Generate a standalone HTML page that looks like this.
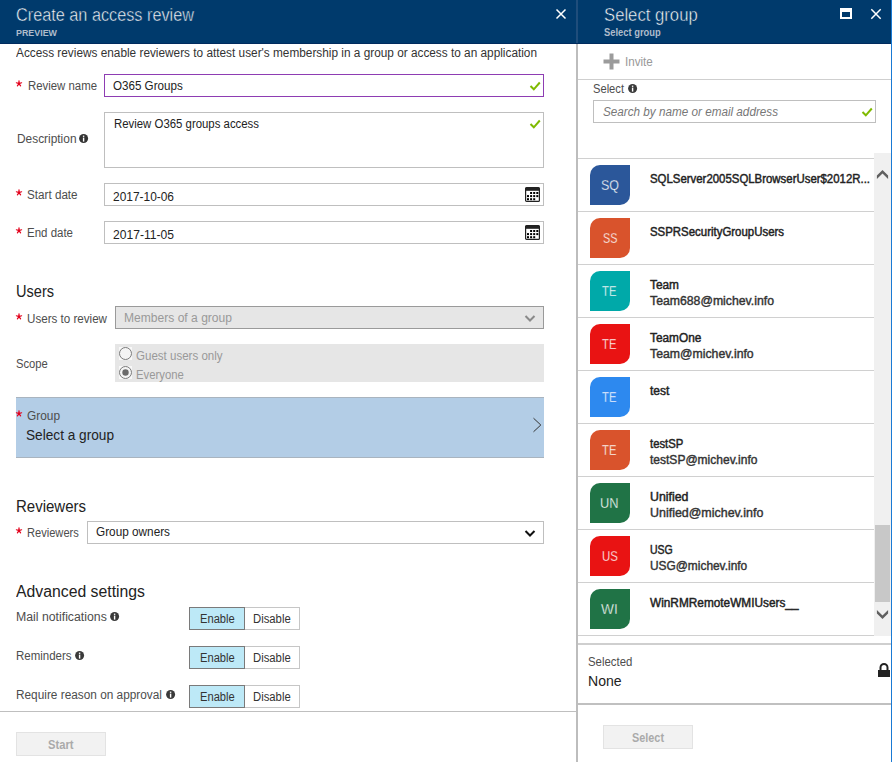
<!DOCTYPE html>
<html><head><meta charset="utf-8"><style>
html,body{margin:0;padding:0;width:892px;height:762px;overflow:hidden;background:#fff;position:relative}
.t{position:absolute;white-space:nowrap;line-height:1;font-family:"Liberation Sans",sans-serif;transform-origin:0 0}
.a{position:absolute;box-sizing:border-box}
</style></head><body>
<!-- header -->
<div class=a style="left:0;top:0;width:892px;height:44px;background:#003a6c"></div>
<div class=a style="left:0;top:43px;width:892px;height:1px;background:#002b5e"></div>
<!-- dividers -->
<div class=a style="left:576px;top:0;width:2px;height:43px;background:#1f4d7b"></div>
<div class=a style="left:576px;top:44px;width:2px;height:718px;background:#bdbdbd"></div>
<div class=a style="left:891px;top:0;width:1px;height:762px;background:#1a7ad4"></div>
<!-- left close -->
<svg class=a style="left:555px;top:8px" width="12" height="12" viewBox="0 0 12 12"><path d="M1.5 1.5L10.5 10.5M10.5 1.5L1.5 10.5" stroke="#fff" stroke-width="1.5"/></svg>
<!-- right header icons -->
<div class=a style="left:840px;top:8px;width:12px;height:11px;border:2px solid #fff;border-top-width:4px"></div>
<svg class=a style="left:870px;top:8px" width="12" height="12" viewBox="0 0 12 12"><path d="M1.3 1.3L10.7 10.7M10.7 1.3L1.3 10.7" stroke="#fff" stroke-width="1.5"/></svg>

<!-- review name input -->
<div class=a style="left:104px;top:74px;width:440px;height:23px;border:1px solid #8e3db3"></div>
<svg class=a style="left:529px;top:81px" width="12" height="10" viewBox="0 0 12 10"><path d="M1.5 5L4.8 8.3L10.8 1.5" fill="none" stroke="#7fba00" stroke-width="2"/></svg>
<!-- description -->
<div class=a style="left:104px;top:112px;width:440px;height:56px;border:1px solid #bfbfbf"></div>
<svg class=a style="left:529px;top:119px" width="12" height="10" viewBox="0 0 12 10"><path d="M1.5 5L4.8 8.3L10.8 1.5" fill="none" stroke="#7fba00" stroke-width="2"/></svg>
<!-- info icon desc -->
<svg class=a style="left:79px;top:134px" width="10" height="10" viewBox="0 0 10 10"><circle cx="4.6" cy="4.5" r="4.5" fill="#333"/><rect x="3.9" y="1.6" width="1.4" height="1.3" fill="#fff"/><rect x="3.9" y="3.6" width="1.4" height="4" fill="#fff"/></svg>
<!-- start date -->
<div class=a style="left:104px;top:183px;width:440px;height:23px;border:1px solid #bfbfbf"></div>
<div class=a style="left:104px;top:221px;width:440px;height:23px;border:1px solid #bfbfbf"></div>
<svg class=a style="left:525px;top:187px" width="15" height="15" viewBox="0 0 15 15"><rect x="0.6" y="0.6" width="13.8" height="13.8" rx="1" fill="#fff" stroke="#222" stroke-width="1.2"/><rect x="0.6" y="0.6" width="13.8" height="3.2" fill="#222"/><rect x="5.1" y="5.0" width="2" height="2" fill="#000"/><rect x="8.2" y="5.0" width="2" height="2" fill="#000"/><rect x="11.3" y="5.0" width="2" height="2" fill="#000"/><rect x="2.0" y="8.1" width="2" height="2" fill="#000"/><rect x="5.1" y="8.1" width="2" height="2" fill="#000"/><rect x="8.2" y="8.1" width="2" height="2" fill="#000"/><rect x="11.3" y="8.1" width="2" height="2" fill="#000"/><rect x="2.0" y="11.2" width="2" height="2" fill="#000"/><rect x="5.1" y="11.2" width="2" height="2" fill="#000"/><rect x="8.2" y="11.2" width="2" height="2" fill="#000"/></svg>
<svg class=a style="left:525px;top:225px" width="15" height="15" viewBox="0 0 15 15"><rect x="0.6" y="0.6" width="13.8" height="13.8" rx="1" fill="#fff" stroke="#222" stroke-width="1.2"/><rect x="0.6" y="0.6" width="13.8" height="3.2" fill="#222"/><rect x="5.1" y="5.0" width="2" height="2" fill="#000"/><rect x="8.2" y="5.0" width="2" height="2" fill="#000"/><rect x="11.3" y="5.0" width="2" height="2" fill="#000"/><rect x="2.0" y="8.1" width="2" height="2" fill="#000"/><rect x="5.1" y="8.1" width="2" height="2" fill="#000"/><rect x="8.2" y="8.1" width="2" height="2" fill="#000"/><rect x="11.3" y="8.1" width="2" height="2" fill="#000"/><rect x="2.0" y="11.2" width="2" height="2" fill="#000"/><rect x="5.1" y="11.2" width="2" height="2" fill="#000"/><rect x="8.2" y="11.2" width="2" height="2" fill="#000"/></svg>
<!-- users to review select -->
<div class=a style="left:115px;top:306px;width:429px;height:23px;border:1px solid #9a9a9a;background:#e6e6e6"></div>
<svg class=a style="left:524px;top:313.5px" width="12" height="9" viewBox="0 0 12 9"><path d="M1.5 2L6 6.5L10.5 2" fill="none" stroke="#8a8a8a" stroke-width="2"/></svg>
<!-- scope -->
<div class=a style="left:115px;top:344px;width:429px;height:38px;background:#e6e6e6"></div>
<svg class=a style="left:118px;top:346px" width="15" height="15" viewBox="0 0 15 15"><rect x="1" y="1" width="13" height="13" fill="#f8f8f8"/><circle cx="7.5" cy="7.5" r="6" fill="#f4f4f4" stroke="#7a7a7a" stroke-width="1"/></svg>
<svg class=a style="left:118px;top:365px" width="15" height="15" viewBox="0 0 15 15"><rect x="1" y="1" width="13" height="13" fill="#f8f8f8"/><circle cx="7.5" cy="7.5" r="6" fill="#f4f4f4" stroke="#7a7a7a" stroke-width="1"/><circle cx="7.5" cy="7.5" r="3.2" fill="#6a6a6a"/></svg>
<!-- group -->
<div class=a style="left:16px;top:397px;width:528px;height:61px;background:#b3cde6;border-top:1px solid #a9b4bf;border-bottom:1px solid #a9b4bf"></div>
<svg class=a style="left:532px;top:417px" width="11" height="16" viewBox="0 0 11 16"><path d="M1.5 1.2L8.8 8L1.5 14.8" fill="none" stroke="#333" stroke-width="1"/></svg>
<!-- reviewers select -->
<div class=a style="left:87px;top:521px;width:457px;height:23px;border:1px solid #bfbfbf"></div>
<svg class=a style="left:524px;top:528.5px" width="12" height="9" viewBox="0 0 12 9"><path d="M1.5 2L6 6.5L10.5 2" fill="none" stroke="#111" stroke-width="2"/></svg>
<!-- info icons -->
<svg class=a style="left:109.8px;top:612px" width="10" height="10" viewBox="0 0 10 10"><circle cx="4.6" cy="4.5" r="4.5" fill="#3a3a3a"/><rect x="3.9" y="1.6" width="1.4" height="1.3" fill="#fff"/><rect x="3.9" y="3.6" width="1.4" height="4" fill="#fff"/></svg><svg class=a style="left:75px;top:651px" width="10" height="10" viewBox="0 0 10 10"><circle cx="4.6" cy="4.5" r="4.5" fill="#3a3a3a"/><rect x="3.9" y="1.6" width="1.4" height="1.3" fill="#fff"/><rect x="3.9" y="3.6" width="1.4" height="4" fill="#fff"/></svg><svg class=a style="left:165.5px;top:690px" width="10" height="10" viewBox="0 0 10 10"><circle cx="4.6" cy="4.5" r="4.5" fill="#3a3a3a"/><rect x="3.9" y="1.6" width="1.4" height="1.3" fill="#fff"/><rect x="3.9" y="3.6" width="1.4" height="4" fill="#fff"/></svg><svg class=a style="left:627.5px;top:84px" width="10" height="10" viewBox="0 0 10 10"><circle cx="4.6" cy="4.5" r="4.5" fill="#3a3a3a"/><rect x="3.9" y="1.6" width="1.4" height="1.3" fill="#fff"/><rect x="3.9" y="3.6" width="1.4" height="4" fill="#fff"/></svg>
<!-- toggles -->
<div class=a style="left:244px;top:607px;width:56px;height:23px;border:1px solid #c6c6c6;background:#fff"></div><div class=a style="left:189px;top:607px;width:56px;height:23px;border:1px solid #7a7a7a;background:#bde9f7"></div><div class=a style="left:244px;top:646px;width:56px;height:23px;border:1px solid #c6c6c6;background:#fff"></div><div class=a style="left:189px;top:646px;width:56px;height:23px;border:1px solid #7a7a7a;background:#bde9f7"></div><div class=a style="left:244px;top:685px;width:56px;height:23px;border:1px solid #c6c6c6;background:#fff"></div><div class=a style="left:189px;top:685px;width:56px;height:23px;border:1px solid #7a7a7a;background:#bde9f7"></div>
<!-- footer -->
<div class=a style="left:0;top:711px;width:576px;height:1px;background:#bfbfbf"></div>
<div class=a style="left:16px;top:732px;width:90px;height:24px;border:1px solid #e3e3e3;background:#f2f2f2"></div>

<!-- RIGHT -->
<svg class=a style="left:603px;top:53px" width="17" height="17" viewBox="0 0 17 17"><rect x="6.5" y="0.5" width="4" height="16" fill="#9b9b9b"/><rect x="0.5" y="6.5" width="16" height="4" fill="#9b9b9b"/></svg>
<div class=a style="left:578px;top:79px;width:313px;height:1px;background:#cfcfcf"></div>
<div class=a style="left:593px;top:100px;width:283px;height:23px;border:1px solid #bfbfbf"></div>
<svg class=a style="left:861px;top:107px" width="12" height="10" viewBox="0 0 12 10"><path d="M1.5 5L4.8 8.3L10.8 1.5" fill="none" stroke="#7fba00" stroke-width="2"/></svg>
<!-- scroll track -->
<div class=a style="left:874px;top:153px;width:17px;height:483px;background:#f0f0f0"></div>
<div class=a style="left:875px;top:525px;width:15px;height:77px;background:#c8c8c8"></div>
<svg class=a style="left:876px;top:168px" width="13" height="12" viewBox="0 0 13 12"><path d="M0.9 7.6L6.5 2L12.1 7.6V11L6.5 5.6L0.9 11Z" fill="#606060"/></svg>
<svg class=a style="left:876px;top:609px" width="13" height="12" viewBox="0 0 13 12"><path d="M0.9 1L6.5 6.6L12.1 1V4.4L6.5 10L0.9 4.4Z" fill="#606060"/></svg>
<div class=a style="left:578px;top:158px;width:296px;height:1px;background:#d0d0d0"></div><div class=a style="left:578px;top:211px;width:296px;height:1px;background:#d0d0d0"></div><div class=a style="left:578px;top:264px;width:296px;height:1px;background:#d0d0d0"></div><div class=a style="left:578px;top:317px;width:296px;height:1px;background:#d0d0d0"></div><div class=a style="left:578px;top:370px;width:296px;height:1px;background:#d0d0d0"></div><div class=a style="left:578px;top:423px;width:296px;height:1px;background:#d0d0d0"></div><div class=a style="left:578px;top:476px;width:296px;height:1px;background:#d0d0d0"></div><div class=a style="left:578px;top:529px;width:296px;height:1px;background:#d0d0d0"></div><div class=a style="left:578px;top:582px;width:296px;height:1px;background:#d0d0d0"></div><div class=a style="left:578px;top:635px;width:296px;height:1px;background:#d0d0d0"></div>
<div class=a style="left:590px;top:165px;width:40px;height:40px;background:#2b579a;border-radius:10px 0 10px 0"></div><div class=a style="left:590px;top:218px;width:40px;height:40px;background:#d9532c;border-radius:10px 0 10px 0"></div><div class=a style="left:590px;top:271px;width:40px;height:40px;background:#00a9a9;border-radius:10px 0 10px 0"></div><div class=a style="left:590px;top:324px;width:40px;height:40px;background:#e91313;border-radius:10px 0 10px 0"></div><div class=a style="left:590px;top:377px;width:40px;height:40px;background:#2d89ef;border-radius:10px 0 10px 0"></div><div class=a style="left:590px;top:430px;width:40px;height:40px;background:#d9532c;border-radius:10px 0 10px 0"></div><div class=a style="left:590px;top:483px;width:40px;height:40px;background:#207346;border-radius:10px 0 10px 0"></div><div class=a style="left:590px;top:536px;width:40px;height:40px;background:#e91313;border-radius:10px 0 10px 0"></div><div class=a style="left:590px;top:589px;width:40px;height:40px;background:#207346;border-radius:10px 0 10px 0"></div>

<svg class=a style="left:0;top:0" width="40" height="600" viewBox="0 0 40 600"><path d="M19.00 83.60L19.00 80.90M19.00 83.60L21.57 82.77M19.00 83.60L20.59 85.78M19.00 83.60L17.41 85.78M19.00 83.60L16.43 82.77" stroke="#e3001b" stroke-width="1.25" stroke-linecap="round"/><path d="M19.00 192.60L19.00 189.90M19.00 192.60L21.57 191.77M19.00 192.60L20.59 194.78M19.00 192.60L17.41 194.78M19.00 192.60L16.43 191.77" stroke="#e3001b" stroke-width="1.25" stroke-linecap="round"/><path d="M19.00 230.60L19.00 227.90M19.00 230.60L21.57 229.77M19.00 230.60L20.59 232.78M19.00 230.60L17.41 232.78M19.00 230.60L16.43 229.77" stroke="#e3001b" stroke-width="1.25" stroke-linecap="round"/><path d="M19.00 316.60L19.00 313.90M19.00 316.60L21.57 315.77M19.00 316.60L20.59 318.78M19.00 316.60L17.41 318.78M19.00 316.60L16.43 315.77" stroke="#e3001b" stroke-width="1.25" stroke-linecap="round"/><path d="M19.00 413.60L19.00 410.90M19.00 413.60L21.57 412.77M19.00 413.60L20.59 415.78M19.00 413.60L17.41 415.78M19.00 413.60L16.43 412.77" stroke="#e3001b" stroke-width="1.25" stroke-linecap="round"/><path d="M19.00 530.60L19.00 527.90M19.00 530.60L21.57 529.77M19.00 530.60L20.59 532.78M19.00 530.60L17.41 532.78M19.00 530.60L16.43 529.77" stroke="#e3001b" stroke-width="1.25" stroke-linecap="round"/></svg>
<div class=a style="left:578px;top:643px;width:313px;height:2px;background:#cfcfcf"></div>
<div class=a style="left:578px;top:703px;width:313px;height:2px;background:#c0c0c0"></div>
<svg class=a style="left:877px;top:662px" width="14" height="16" viewBox="0 0 14 16"><path d="M3.5 8.5V5.5A3.5 3.5 0 0 1 10.5 5.5V8.5" fill="none" stroke="#222" stroke-width="2"/><rect x="1" y="8" width="12" height="7" fill="#222"/></svg>
<div class=a style="left:603px;top:725px;width:90px;height:24px;border:1px solid #e3e3e3;background:#f2f2f2"></div>

<div class=t style="left:16px;top:6px;font-size:18px;font-weight:400;color:#fff;transform:scaleX(0.9031);-webkit-text-stroke:0.5px #003a6c;">Create an access review</div>
<div class=t style="left:16px;top:29px;font-size:9px;font-weight:700;color:#afbccb;transform:scaleX(0.9876);">PREVIEW</div>
<div class=t style="left:16px;top:47px;font-size:12px;font-weight:400;color:#333;transform:scaleX(0.9845);">Access reviews enable reviewers to attest user&#x27;s membership in a group or access to an application</div>
<div class=t style="left:27.5px;top:80px;font-size:12px;font-weight:400;color:#4d4d4d;transform:scaleX(0.9491);">Review name</div>
<div class=t style="left:113px;top:80px;font-size:12px;font-weight:400;color:#222;transform:scaleX(0.9674);">O365 Groups</div>
<div class=t style="left:16.5px;top:133px;font-size:12px;font-weight:400;color:#4d4d4d;transform:scaleX(0.9912);">Description</div>
<div class=t style="left:113.5px;top:118px;font-size:12px;font-weight:400;color:#222;transform:scaleX(0.9493);">Review O365 groups access</div>
<div class=t style="left:27.4px;top:189px;font-size:12px;font-weight:400;color:#4d4d4d;transform:scaleX(0.9725);">Start date</div>
<div class=t style="left:113px;top:191px;font-size:12px;font-weight:400;color:#222;transform:scaleX(0.9936);">2017-10-06</div>
<div class=t style="left:27.4px;top:227px;font-size:12px;font-weight:400;color:#4d4d4d;transform:scaleX(0.9574);">End date</div>
<div class=t style="left:113px;top:229px;font-size:12px;font-weight:400;color:#222;transform:scaleX(1.0083);">2017-11-05</div>
<div class=t style="left:16px;top:284px;font-size:16px;font-weight:400;color:#222;transform:scaleX(0.9095);">Users</div>
<div class=t style="left:27.4px;top:313px;font-size:12px;font-weight:400;color:#4d4d4d;transform:scaleX(0.9675);">Users to review</div>
<div class=t style="left:124px;top:312px;font-size:12px;font-weight:400;color:#999;transform:scaleX(1.0057);">Members of a group</div>
<div class=t style="left:16px;top:358px;font-size:12px;font-weight:400;color:#4d4d4d;transform:scaleX(0.9344);">Scope</div>
<div class=t style="left:135.7px;top:350px;font-size:12px;font-weight:400;color:#999;transform:scaleX(0.9617);">Guest users only</div>
<div class=t style="left:135.7px;top:369px;font-size:12px;font-weight:400;color:#999;transform:scaleX(0.9427);">Everyone</div>
<div class=t style="left:26.8px;top:410px;font-size:12px;font-weight:400;color:#4d4d4d;transform:scaleX(0.9892);">Group</div>
<div class=t style="left:26.3px;top:428px;font-size:14px;font-weight:400;color:#222;transform:scaleX(0.9746);">Select a group</div>
<div class=t style="left:16px;top:499px;font-size:16px;font-weight:400;color:#222;transform:scaleX(0.9372);">Reviewers</div>
<div class=t style="left:27.4px;top:527px;font-size:12px;font-weight:400;color:#4d4d4d;transform:scaleX(0.9247);">Reviewers</div>
<div class=t style="left:95.7px;top:525.5px;font-size:12px;font-weight:400;color:#222;transform:scaleX(0.9818);">Group owners</div>
<div class=t style="left:16px;top:584px;font-size:16px;font-weight:400;color:#222;transform:scaleX(0.9866);">Advanced settings</div>
<div class=t style="left:16px;top:611px;font-size:12px;font-weight:400;color:#4d4d4d;transform:scaleX(1.0235);">Mail notifications</div>
<div class=t style="left:16px;top:650px;font-size:12px;font-weight:400;color:#4d4d4d;transform:scaleX(0.9581);">Reminders</div>
<div class=t style="left:16px;top:689px;font-size:12px;font-weight:400;color:#4d4d4d;transform:scaleX(0.9858);">Require reason on approval</div>
<div class=t style="left:199.7px;top:613px;font-size:12px;font-weight:400;color:#333;transform:scaleX(0.9284);">Enable</div>
<div class=t style="left:253.3px;top:613px;font-size:12px;font-weight:400;color:#333;transform:scaleX(0.9418);">Disable</div>
<div class=t style="left:199.7px;top:652px;font-size:12px;font-weight:400;color:#333;transform:scaleX(0.9284);">Enable</div>
<div class=t style="left:253.3px;top:652px;font-size:12px;font-weight:400;color:#333;transform:scaleX(0.9418);">Disable</div>
<div class=t style="left:199.7px;top:691px;font-size:12px;font-weight:400;color:#333;transform:scaleX(0.9284);">Enable</div>
<div class=t style="left:253.3px;top:691px;font-size:12px;font-weight:400;color:#333;transform:scaleX(0.9418);">Disable</div>
<div class=t style="left:48.1px;top:739px;font-size:12px;font-weight:700;color:#aaa;transform:scaleX(0.9326);">Start</div>
<div class=t style="left:603.6px;top:5.5px;font-size:18px;font-weight:400;color:#fff;transform:scaleX(0.9270);-webkit-text-stroke:0.5px #003a6c;">Select group</div>
<div class=t style="left:603.5px;top:28px;font-size:10px;font-weight:700;color:#afbccb;transform:scaleX(0.9360);">Select group</div>
<div class=t style="left:624.6px;top:56px;font-size:12px;font-weight:400;color:#999;transform:scaleX(0.9691);">Invite</div>
<div class=t style="left:593px;top:83px;font-size:12px;font-weight:400;color:#4d4d4d;transform:scaleX(0.9293);">Select</div>
<div class=t style="left:602.6px;top:106px;font-size:12px;font-weight:400;color:#777;transform:scaleX(0.9754);font-style:italic;">Search by name or email address</div>
<div class=t style="left:600.8000000000001px;top:178px;font-size:14px;font-weight:400;color:#fff;transform:scaleX(0.8896);-webkit-text-stroke:0.3px #2b579a;">SQ</div>
<div class=t style="left:650px;top:173px;font-size:12px;font-weight:400;color:#222;transform:scaleX(0.9505);-webkit-text-stroke:0.45px #222;">SQLServer2005SQLBrowserUser$2012R...</div>
<div class=t style="left:602.5px;top:231px;font-size:14px;font-weight:400;color:#fff;transform:scaleX(0.7706);-webkit-text-stroke:0.3px #d9532c;">SS</div>
<div class=t style="left:650px;top:226px;font-size:12px;font-weight:400;color:#222;transform:scaleX(0.9523);-webkit-text-stroke:0.45px #222;">SSPRSecurityGroupUsers</div>
<div class=t style="left:602.0px;top:284px;font-size:14px;font-weight:400;color:#fff;transform:scaleX(0.8049);-webkit-text-stroke:0.3px #00a9a9;">TE</div>
<div class=t style="left:650px;top:279px;font-size:12px;font-weight:400;color:#222;transform:scaleX(0.9883);-webkit-text-stroke:0.45px #222;">Team</div>
<div class=t style="left:650px;top:295px;font-size:12px;font-weight:400;color:#333;transform:scaleX(1.0218);-webkit-text-stroke:0.4px #333;">Team688@michev.info</div>
<div class=t style="left:602.0px;top:337px;font-size:14px;font-weight:400;color:#fff;transform:scaleX(0.8049);-webkit-text-stroke:0.3px #e91313;">TE</div>
<div class=t style="left:650px;top:332px;font-size:12px;font-weight:400;color:#222;transform:scaleX(0.9859);-webkit-text-stroke:0.45px #222;">TeamOne</div>
<div class=t style="left:650px;top:348px;font-size:12px;font-weight:400;color:#333;transform:scaleX(1.0234);-webkit-text-stroke:0.4px #333;">Team@michev.info</div>
<div class=t style="left:602.0px;top:390px;font-size:14px;font-weight:400;color:#fff;transform:scaleX(0.8049);-webkit-text-stroke:0.3px #2d89ef;">TE</div>
<div class=t style="left:650px;top:385px;font-size:12px;font-weight:400;color:#222;transform:scaleX(1.0029);-webkit-text-stroke:0.45px #222;">test</div>
<div class=t style="left:602.0px;top:443px;font-size:14px;font-weight:400;color:#fff;transform:scaleX(0.8049);-webkit-text-stroke:0.3px #d9532c;">TE</div>
<div class=t style="left:650px;top:438px;font-size:12px;font-weight:400;color:#222;transform:scaleX(0.9418);-webkit-text-stroke:0.45px #222;">testSP</div>
<div class=t style="left:650px;top:454px;font-size:12px;font-weight:400;color:#333;transform:scaleX(1.0015);-webkit-text-stroke:0.4px #333;">testSP@michev.info</div>
<div class=t style="left:600.1px;top:496px;font-size:14px;font-weight:400;color:#fff;transform:scaleX(0.9143);-webkit-text-stroke:0.3px #207346;">UN</div>
<div class=t style="left:650px;top:491px;font-size:12px;font-weight:400;color:#222;transform:scaleX(1.0279);-webkit-text-stroke:0.45px #222;">Unified</div>
<div class=t style="left:650px;top:507px;font-size:12px;font-weight:400;color:#333;transform:scaleX(1.0371);-webkit-text-stroke:0.4px #333;">Unified@michev.info</div>
<div class=t style="left:601.9000000000001px;top:549px;font-size:14px;font-weight:400;color:#fff;transform:scaleX(0.8173);-webkit-text-stroke:0.3px #e91313;">US</div>
<div class=t style="left:650px;top:544px;font-size:12px;font-weight:400;color:#222;transform:scaleX(0.8764);-webkit-text-stroke:0.45px #222;">USG</div>
<div class=t style="left:650px;top:560px;font-size:12px;font-weight:400;color:#333;transform:scaleX(0.9918);-webkit-text-stroke:0.4px #333;">USG@michev.info</div>
<div class=t style="left:600.9000000000001px;top:602px;font-size:14px;font-weight:400;color:#fff;transform:scaleX(0.9761);-webkit-text-stroke:0.3px #207346;">WI</div>
<div class=t style="left:650px;top:597px;font-size:12px;font-weight:400;color:#222;transform:scaleX(0.9855);-webkit-text-stroke:0.45px #222;">WinRMRemoteWMIUsers__</div>
<div class=t style="left:588px;top:656px;font-size:12px;font-weight:400;color:#4d4d4d;transform:scaleX(0.9485);">Selected</div>
<div class=t style="left:588px;top:674px;font-size:14px;font-weight:400;color:#222;transform:scaleX(1.0039);">None</div>
<div class=t style="left:631.8px;top:732px;font-size:12px;font-weight:700;color:#aaa;transform:scaleX(0.9050);">Select</div>
</body></html>
